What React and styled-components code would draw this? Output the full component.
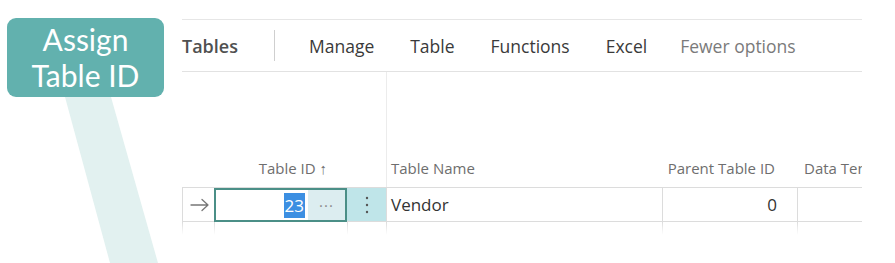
import styled, { createGlobalStyle } from "styled-components";

const GlobalStyle = createGlobalStyle`
  body {
    margin: 0;
    background: #fff;
    font-family: "Open Sans", "Noto Sans", sans-serif;
  }
`;

const columns = "32px 133px 39px 276px 135px 65px";

const menuItems = ["Manage", "Table", "Functions", "Excel"];

const App = () => {
  return (
    <Page>
      <GlobalStyle />
      <Wedge width="182" height="263" viewBox="0 0 182 263">
        <polygon points="65,97 111,97 158,263 110,263" fill="#e2f1f0" />
      </Wedge>
      <Aside>
        <Callout>
          Assign
          <br />
          Table ID
        </Callout>
      </Aside>
      <Main>
        <Toolbar>
          <Title>Tables</Title>
          <Divider />
          {menuItems.map((item) => (
            <MenuItem key={item}>{item}</MenuItem>
          ))}
          <MenuItem muted>Fewer options</MenuItem>
        </Toolbar>
        <Grid>
          <HeadCell />
          <HeadCell align="right" pad="0 20px 0 0">
            Table ID ↑
          </HeadCell>
          <HeadCell />
          <HeadCell line pad="0 0 0 4px">
            Table Name
          </HeadCell>
          <HeadCell align="right" pad="0 22px 0 0">
            Parent Table ID
          </HeadCell>
          <HeadCell pad="0 0 0 7px">Data Ten</HeadCell>

          <Cell first align="center">
            <ArrowIcon width="20" height="14" viewBox="0 0 20 14">
              <path
                d="M1 7 H18 M12 1.5 L18 7 L12 12.5"
                fill="none"
                stroke="#777"
                strokeWidth="1.3"
                strokeLinecap="round"
                strokeLinejoin="round"
              />
            </ArrowIcon>
          </Cell>
          <Cell>
            <InputBox>
              <Value>
                <Selected>23</Selected>
              </Value>
              <Ellipsis>···</Ellipsis>
            </InputBox>
          </Cell>
          <Cell bg="#bfe5e9" align="center">
            <DotsIcon width="4" height="18" viewBox="0 0 4 18">
              <circle cx="2" cy="2" r="1.2" fill="#555" />
              <circle cx="2" cy="9" r="1.2" fill="#555" />
              <circle cx="2" cy="16" r="1.2" fill="#555" />
            </DotsIcon>
          </Cell>
          <Cell line pad="0 0 0 4px">Vendor</Cell>
          <Cell line align="right" pad="0 20px 0 0">
            0
          </Cell>
          <Cell line />

          <Stub first />
          <Stub line />
          <Stub line />
          <Stub line />
          <Stub line />
          <Stub line />
        </Grid>
      </Main>
    </Page>
  );
};

export default App;

const Page = styled.div`
  position: relative;
  display: flex;
  width: 895px;
  height: 263px;
  overflow: hidden;
`;

const Wedge = styled.svg`
  position: absolute;
  left: 0;
  top: 0;
`;

const Aside = styled.div`
  position: relative;
  width: 182px;
  padding: 18px 0 0 7px;
  box-sizing: border-box;
`;

const Callout = styled.div`
  width: 157px;
  height: 79px;
  border-radius: 9px;
  background: #62b1ae;
  color: #fff;
  font-family: Lato, "Open Sans", sans-serif;
  font-size: 30px;
  line-height: 36px;
  text-align: center;
  padding-top: 3px;
  box-sizing: border-box;
`;

const Main = styled.div`
  width: 680px;
  padding-top: 19px;
`;

const Toolbar = styled.div`
  display: flex;
  align-items: center;
  height: 53px;
  box-sizing: border-box;
  border-top: 1px solid #e6e6e6;
  border-bottom: 1px solid #e2e2e2;
  white-space: nowrap;
`;

const Title = styled.div`
  font-size: 18px;
  font-weight: 600;
  color: #505050;
`;

const Divider = styled.div`
  width: 1px;
  height: 31px;
  background: #cfcfcf;
  margin: 0 16px 0 36px;
`;

const MenuItem = styled.div`
  font-size: 17.5px;
  color: ${(p) => (p.muted ? "#7a7a7a" : "#3a3a3a")};
  padding: 0 18px;

  &:last-child {
    padding-left: 15px;
  }
`;

const Grid = styled.div`
  display: grid;
  grid-template-columns: ${columns};
  grid-template-rows: 115px 35px 13px;
  font-size: 17px;
  color: #333;
`;

const HeadCell = styled.div`
  display: flex;
  align-items: flex-end;
  justify-content: ${(p) =>
    p.align === "right" ? "flex-end" : p.align === "center" ? "center" : "flex-start"};
  padding: ${(p) => p.pad || "0"};
  padding-bottom: 9px;
  font-size: 15px;
  color: #6e6e6e;
  white-space: nowrap;
  overflow: hidden;
  border-left: ${(p) => (p.line ? "1px solid #ececec" : "none")};
`;

const Cell = styled.div`
  display: flex;
  align-items: center;
  justify-content: ${(p) =>
    p.align === "right" ? "flex-end" : p.align === "center" ? "center" : "flex-start"};
  padding: ${(p) => p.pad || "0"};
  background: ${(p) => p.bg || "transparent"};
  border-top: 1px solid #dcdcdc;
  border-bottom: 1px solid #dcdcdc;
  border-left: ${(p) => (p.line || p.first ? "1px solid #dcdcdc" : "none")};
  box-sizing: border-box;
  white-space: nowrap;
`;

const Stub = styled.div`
  border-left: ${(p) => (p.line || p.first ? "1px solid #dcdcdc" : "none")};
  -webkit-mask-image: linear-gradient(#000, transparent);
  mask-image: linear-gradient(#000, transparent);
`;

const ArrowIcon = styled.svg`
  display: block;
  margin-left: 2px;
`;

const InputBox = styled.div`
  display: flex;
  align-self: stretch;
  flex: 1;
  margin: 0 0 -1px 0;
  border: 2px solid #4b8f87;
  box-sizing: border-box;
`;

const Value = styled.div`
  flex: 1;
  display: flex;
  align-items: center;
  justify-content: flex-end;
  padding-right: 3px;
`;

const Selected = styled.span`
  background: #3c8fe2;
  color: #fff;
  font-size: 17px;
  line-height: 25px;
  padding: 0 1px;
`;

const Ellipsis = styled.div`
  width: 37px;
  display: flex;
  align-items: center;
  justify-content: center;
  background: #dcedf0;
  color: #8a8a8a;
  font-size: 15px;
  letter-spacing: 1px;
`;

const DotsIcon = styled.svg`
  display: block;
`;
